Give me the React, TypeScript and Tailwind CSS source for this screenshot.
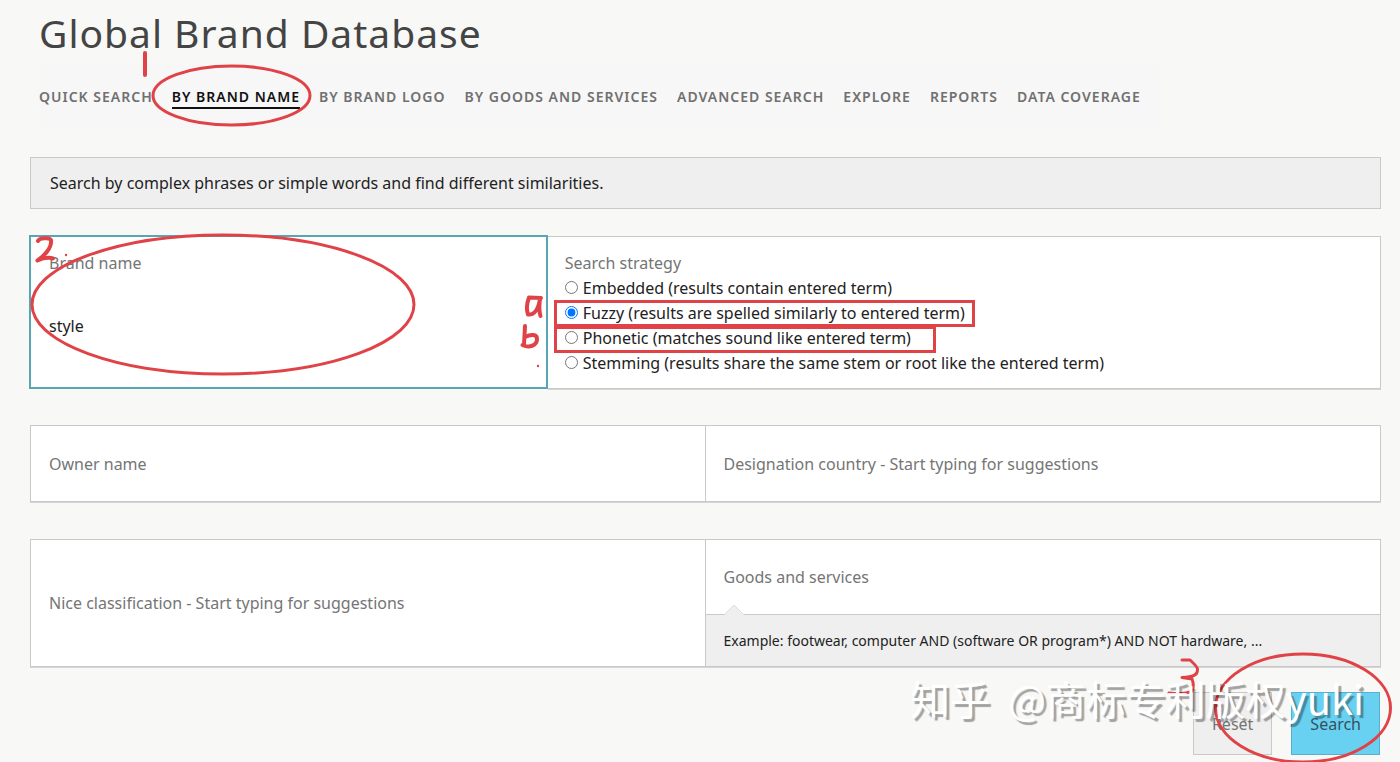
const tabs = [
  "Quick search",
  "By brand name",
  "By brand logo",
  "By goods and services",
  "Advanced search",
  "Explore",
  "Reports",
  "Data coverage",
];

const strategies = [
  { id: "embedded", label: "Embedded (results contain entered term)" },
  { id: "fuzzy", label: "Fuzzy (results are spelled similarly to entered term)" },
  { id: "phonetic", label: "Phonetic (matches sound like entered term)" },
  { id: "stemming", label: "Stemming (results share the same stem or root like the entered term)" },
];

const fieldInput =
  "block w-full bg-transparent px-[18px] text-base text-[#222] outline-none placeholder:text-[#757575]";

function Annotations() {
  return (
    <svg
      className="pointer-events-none absolute top-0 left-0"
      width="1400"
      height="762"
      viewBox="0 0 1400 762"
      fill="none"
      stroke="#e04347"
      strokeWidth="3"
      strokeLinecap="round"
      strokeLinejoin="round"
      aria-hidden="true"
    >
      {/* step 1 */}
      <path d="M145 53 L145 75" strokeWidth="4" />
      <ellipse cx="231.500" cy="95.500" rx="78.500" ry="29.500" />

      {/* step 2 */}
      <path d="M38 241 C39 238 49 237 51 240 C52 248 44 256 37.500 260.500 C43 258 48 257 53 258.500" strokeWidth="4" />
      <circle cx="66" cy="255" r="1.200" fill="#e04347" stroke="none" />
      <ellipse cx="223" cy="304.500" rx="191" ry="69.500" />

      {/* options a and b */}
      <path d="M541 298 L529 297.500 C527 303 526 309 528 314.500 C533 315 538 311 540 299 C539 306 539 311 540.500 316" strokeWidth="4" />
      <path d="M525 326 L524 345 M525 337 C531 334 537 334 537 339 C537 346 529 348 522.500 345" strokeWidth="4" />
      <circle cx="538" cy="366" r="1.200" fill="#e04347" stroke="none" />
      <rect x="555.500" y="301.500" width="418" height="24" strokeLinejoin="miter" />
      <rect x="555.500" y="327.500" width="379" height="24" strokeLinejoin="miter" />

      {/* step 3 */}
      <path d="M1182 660 L1190 660 C1193 663 1197 666 1197.500 669 C1198 675 1193 677 1182 677.500 L1192 679 C1194 684 1193 689 1192 691 C1186 694 1178 694 1169 693" />
      <ellipse cx="1303" cy="708" rx="87.500" ry="54" />
    </svg>
  );
}

export default function App() {
  return (
    <div className="relative min-h-screen overflow-hidden bg-[#f8f8f6] pr-[19px] pl-[30px] font-['Noto_Sans',sans-serif] text-base text-[#222]">
      <header className="pl-[9px]">
        <h1 className="pt-1 text-[39px] leading-[58px] tracking-[1px] text-[#444]">
          Global Brand Database
        </h1>
        <nav className="mt-[3px] flex h-16 w-fit items-center gap-[19px] bg-[#f7f7f7] pr-5 text-sm font-semibold tracking-[1px] whitespace-nowrap uppercase">
          {tabs.map((tab) => (
            <a
              key={tab}
              href="#"
              className={
                tab === "By brand name"
                  ? "border-y-2 border-t-transparent border-b-[#111] leading-5 text-[#111]"
                  : "border-y-2 border-transparent leading-5 text-[#707070]"
              }
            >
              {tab}
            </a>
          ))}
        </nav>
      </header>

      <p className="mt-7 border border-[#c9c9c9] bg-[#efefef] px-[19px] py-[13px] leading-6">
        Search by complex phrases or simple words and find different similarities.
      </p>

      <form onSubmit={(e) => e.preventDefault()}>
        <section className="mt-[27px] flex">
          <div className="-mt-px -ml-px w-[38.4%] border-2 border-[#5aa5b4] bg-white pt-[14px]">
            <label htmlFor="brand" className="block px-[18px] leading-6 text-[#757575]">
              Brand name
            </label>
            <input id="brand" defaultValue="style" className={`${fieldInput} mt-[39px] h-6`} />
          </div>
          <fieldset className="min-w-0 flex-1 border border-l-0 border-[#c9c9c9] bg-white pt-[14px] pr-4 pb-[13px] pl-[17px] shadow-[0_1px_0_#d5d5d5]">
            <legend className="float-left w-full leading-6 text-[#757575]">Search strategy</legend>
            {strategies.map((s) => (
              <div key={s.id} className="clear-both flex h-[25px] items-center gap-[5px]">
                <input
                  type="radio"
                  name="strategy"
                  id={s.id}
                  defaultChecked={s.id === "fuzzy"}
                  className="h-[13px] w-[13px]"
                />
                <label htmlFor={s.id} className="whitespace-nowrap">
                  {s.label}
                </label>
              </div>
            ))}
          </fieldset>
        </section>

        <section className="mt-9 grid grid-cols-2 border border-[#c9c9c9] bg-white shadow-[0_1px_0_#d5d5d5]">
          <div className="border-r border-[#c9c9c9]">
            <input aria-label="Owner name" placeholder="Owner name" className={`${fieldInput} h-[75px]`} />
          </div>
          <input
            aria-label="Designation country"
            placeholder="Designation country - Start typing for suggestions"
            className={`${fieldInput} h-[75px]`}
          />
        </section>

        <section className="mt-[37px] grid grid-cols-2 border border-[#c9c9c9] bg-white shadow-[0_1px_0_#d5d5d5]">
          <div className="flex border-r border-[#c9c9c9]">
            <input
              aria-label="Nice classification"
              placeholder="Nice classification - Start typing for suggestions"
              className={fieldInput}
            />
          </div>
          <div>
            <div className="relative">
              <input aria-label="Goods and services" placeholder="Goods and services" className={`${fieldInput} h-[74px]`} />
              <svg className="absolute -bottom-px left-[18px]" width="20" height="10" viewBox="0 0 20 10">
                <path d="M0 10 L10 0 L20 10" fill="#efefef" stroke="#dcdcdc" />
              </svg>
            </div>
            <p className="border-t border-[#c9c9c9] bg-[#efefef] px-[18px] pt-[13px] pb-3 text-sm leading-[26px]">
              Example: footwear, computer AND (software OR program*) AND NOT hardware, ...
            </p>
          </div>
        </section>

        <div className="mt-[25px] flex justify-end gap-[19px] pr-px">
          <button type="reset" className="h-[63px] border border-[#c9c9c9] bg-[#efefef] px-[18px] text-[#757575]">
            Reset
          </button>
          <button type="submit" className="h-[63px] border border-[#5ab0cb] bg-[#68d1f1] px-[18px] text-[#34525c]">
            Search
          </button>
        </div>
      </form>

      <Annotations />
      <div className="pointer-events-none absolute right-9 bottom-9 flex gap-[18px] font-['Noto_Sans_CJK_SC',sans-serif] text-[40px] leading-[56px] whitespace-nowrap text-white [text-shadow:3px_3px_1px_rgba(0,0,0,0.35)]">
        <span>知乎</span>
        <span>@商标专利版权yuki</span>
      </div>
    </div>
  );
}
